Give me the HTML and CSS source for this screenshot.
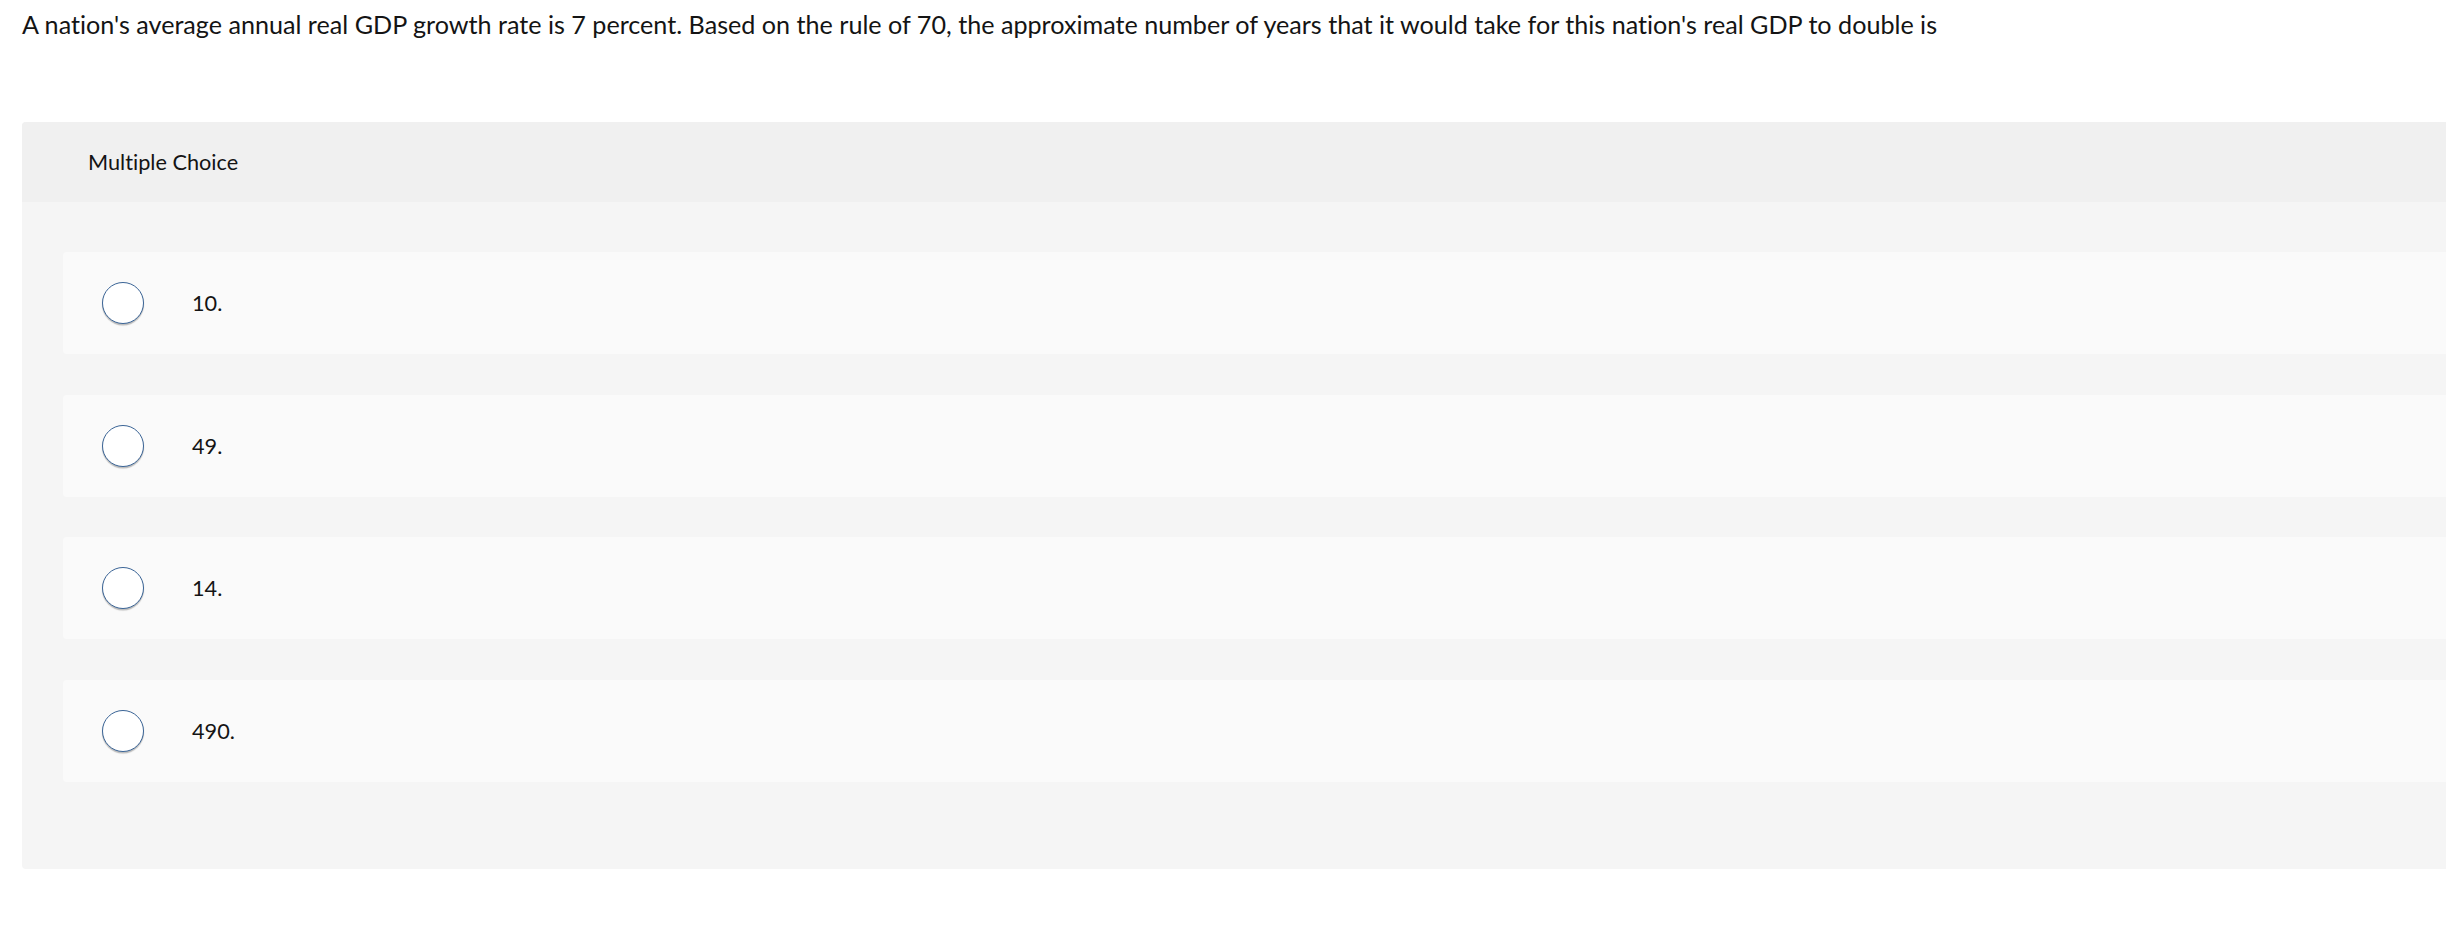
FILE: index.html
```html
<!DOCTYPE html>
<html lang="en">
<head>
<meta charset="utf-8">
<title>Multiple Choice</title>
<link rel="stylesheet" href="styles.css">
</head>
<body>
<main class="page">
  <p class="question">A nation's average annual real GDP growth rate is 7 percent. Based on the rule of 70, the approximate number of years that it would take for this nation's real GDP to double is</p>
  <section class="panel">
    <header class="panel-head">Multiple Choice</header>
    <div class="panel-body">
      <label class="choice"><span class="radio"></span><span class="choice-text">10.</span></label>
      <label class="choice"><span class="radio"></span><span class="choice-text">49.</span></label>
      <label class="choice"><span class="radio"></span><span class="choice-text">14.</span></label>
      <label class="choice"><span class="radio"></span><span class="choice-text">490.</span></label>
    </div>
  </section>
</main>
</body>
</html>
```

FILE: styles.css
```css
html, body {
  margin: 0;
  padding: 0;
  background: #ffffff;
  overflow: hidden;
}
body {
  font-family: Lato, "Open Sans", "Liberation Sans", sans-serif;
  font-variant-ligatures: none;
  color: #141414;
}
.page {
  width: 2600px;
  padding-left: 22px;
}
.question {
  margin: 0;
  padding-top: 3.5px;
  font-size: 25.15px;
  line-height: 40px;
  white-space: nowrap;
}
.panel {
  margin-top: 78.5px;
  background: #f5f5f5;
  border-radius: 4px;
}
.panel-head {
  height: 80px;
  display: flex;
  align-items: center;
  padding-left: 66px;
  background: #f0f0f0;
  font-size: 21.7px;
  border-radius: 4px 4px 0 0;
}
.panel-body {
  padding: 50px 0 87px 41px;
  display: flex;
  flex-direction: column;
  gap: 40.67px;
}
.choice {
  height: 102px;
  display: flex;
  align-items: center;
  padding-left: 39px;
  background: #fafafa;
  border-radius: 4px;
}
.radio {
  width: 40px;
  height: 40px;
  border: 1.6px solid #3a6496;
  border-radius: 50%;
  background: #ffffff;
  box-shadow: 0 1.5px 1px rgba(0, 0, 0, 0.25);
  flex: none;
}
.choice-text {
  margin-left: 48px;
  font-size: 21.7px;
}
```
